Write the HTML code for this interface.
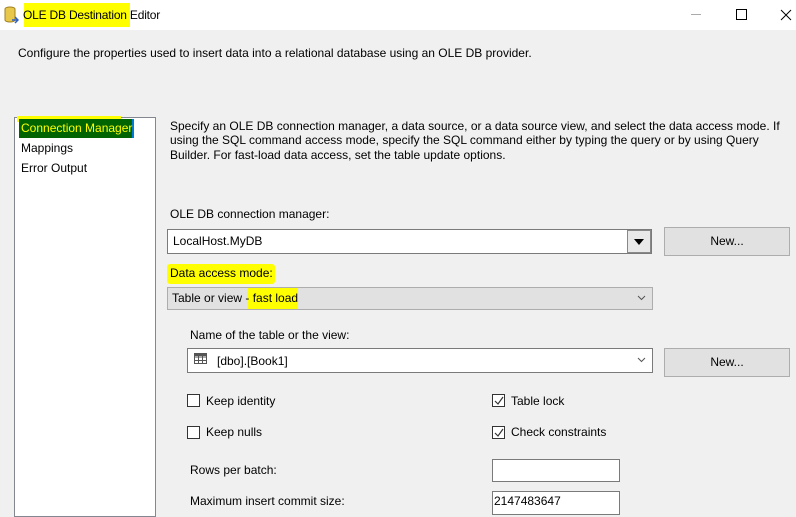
<!DOCTYPE html>
<html><head><style>
*{margin:0;padding:0;box-sizing:border-box}
body{width:796px;height:515px;background:#f0f0f0;font-family:"Liberation Sans",sans-serif;font-size:12px;color:#000;position:relative;overflow:hidden}
.a{position:absolute;white-space:nowrap;line-height:15px}
.hl{background:#ffff00}
.box{position:absolute;border:1px solid #adadad}
.btn{position:absolute;background:#e1e1e1;border:1px solid #adadad;text-align:center;line-height:26px}
.cb{position:absolute;width:13px;height:13px;border:1px solid #333;background:#fff}
</style></head><body>
<div style="position:absolute;left:0;top:0;width:796px;height:30px;background:#fff"></div>
<svg style="position:absolute;left:3px;top:6px" width="16" height="18"><ellipse cx="7" cy="3" rx="5" ry="2" fill="#e8c84a" stroke="#a08020"/><path d="M2 3v11a5 2 0 0 0 10 0V3" fill="#e8c84a" stroke="#a08020"/><path d="M9 14h6M12 11l3 3-3 3" stroke="#3060c0" fill="none" stroke-width="1.5"/></svg>
<div class="hl" style="position:absolute;left:24px;top:3px;width:106px;height:24px"></div>
<div class="a" style="left:23px;top:8px;letter-spacing:-0.2px">OLE DB Destination Editor</div>
<div style="position:absolute;left:691px;top:14px;width:10px;height:1px;background:#aaa"></div>
<div style="position:absolute;left:736px;top:9px;width:11px;height:11px;border:1px solid #000"></div>
<svg style="position:absolute;left:780px;top:9px" width="12" height="12"><path d="M1 1L11 11M11 1L1 11" stroke="#000"/></svg>
<div class="a" style="left:18px;top:46px">Configure the properties used to insert data into a relational database using an OLE DB provider.</div>
<div style="position:absolute;left:14px;top:117px;width:142px;height:400px;background:#fff;border:1px solid #828790"></div>
<div style="position:absolute;left:17px;top:116px;width:104px;height:6px;background:#ffff00"></div>
<div style="position:absolute;left:19px;top:119px;width:115px;height:19px;background:#006400;border-right:2px solid #0078d7"></div>
<div class="a" style="left:21px;top:121px;color:#ffff00">Connection Manager</div>
<div class="a" style="left:21px;top:141px">Mappings</div>
<div class="a" style="left:21px;top:161px">Error Output</div>
<div class="a" style="left:170px;top:119px">Specify an OLE DB connection manager, a data source, or a data source view, and select the data access mode. If</div>
<div class="a" style="left:170px;top:133px">using the SQL command access mode, specify the SQL command either by typing the query or by using Query</div>
<div class="a" style="left:170px;top:148px">Builder. For fast-load data access, set the table update options.</div>
<div class="a" style="left:170px;top:207px">OLE DB connection manager:</div>
<div class="box" style="left:167px;top:229px;width:485px;height:25px;background:#fff;border-color:#7a7a7a"></div>
<div class="a" style="left:173px;top:234px">LocalHost.MyDB</div>
<div style="position:absolute;left:627px;top:230px;width:24px;height:23px;background:#e8e8e8;border:1px solid #888"></div>
<div style="position:absolute;left:634px;top:239px;border-left:5px solid transparent;border-right:5px solid transparent;border-top:6px solid #000"></div>
<div class="btn" style="left:664px;top:227px;width:126px;height:29px">New...</div>
<div class="hl" style="position:absolute;left:167px;top:264px;width:108px;height:20px;border-radius:3px"></div>
<div class="a" style="left:170px;top:266px">Data access mode:</div>
<div class="box" style="left:167px;top:287px;width:486px;height:23px;background:#e1e1e1"></div>
<div class="hl" style="position:absolute;left:248px;top:288px;width:50px;height:21px"></div>
<div class="a" style="left:172px;top:291px">Table or view - fast load</div>
<svg style="position:absolute;left:637px;top:295px" width="9" height="6"><path d="M1 1l3.5 3.5L8 1" stroke="#555" fill="none"/></svg>
<div class="a" style="left:190px;top:328px">Name of the table or the view:</div>
<div class="box" style="left:187px;top:348px;width:466px;height:25px;background:#fff;border-color:#7a7a7a"></div>
<svg style="position:absolute;left:194px;top:353px" width="14" height="12"><rect x="0.5" y="0.5" width="12" height="10" fill="#fff" stroke="#555"/><path d="M0 4h13M0 7.5h13M4.5 0v11M8.5 0v11" stroke="#555"/><rect x="0" y="0" width="13" height="3" fill="#555"/></svg>
<div class="a" style="left:217px;top:354px">[dbo].[Book1]</div>
<svg style="position:absolute;left:637px;top:357px" width="9" height="6"><path d="M1 1l3.5 3.5L8 1" stroke="#555" fill="none"/></svg>
<div class="btn" style="left:664px;top:348px;width:126px;height:29px">New...</div>
<div class="cb" style="left:187px;top:394px"></div>
<div class="a" style="left:206px;top:394px">Keep identity</div>
<div class="cb" style="left:187px;top:426px"></div>
<div class="a" style="left:206px;top:425px">Keep nulls</div>
<div class="cb" style="left:492px;top:394px"></div>
<svg style="position:absolute;left:494px;top:396px" width="10" height="10"><path d="M1 5l3 3 5-7" stroke="#333" fill="none" stroke-width="1.2"/></svg>
<div class="a" style="left:511px;top:394px">Table lock</div>
<div class="cb" style="left:492px;top:426px"></div>
<svg style="position:absolute;left:494px;top:428px" width="10" height="10"><path d="M1 5l3 3 5-7" stroke="#333" fill="none" stroke-width="1.2"/></svg>
<div class="a" style="left:511px;top:425px">Check constraints</div>
<div class="a" style="left:190px;top:463px">Rows per batch:</div>
<div class="box" style="left:492px;top:459px;width:128px;height:23px;background:#fff;border-color:#7a7a7a"></div>
<div class="a" style="left:190px;top:494px">Maximum insert commit size:</div>
<div class="box" style="left:492px;top:491px;width:128px;height:24px;background:#fff;border-color:#7a7a7a"></div>
<div class="a" style="left:494px;top:494px">2147483647</div>
</body></html>
